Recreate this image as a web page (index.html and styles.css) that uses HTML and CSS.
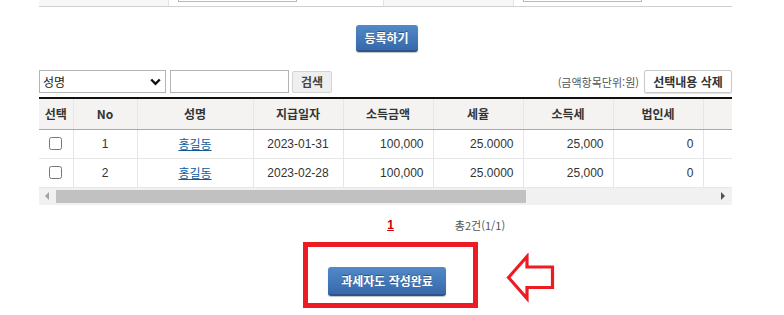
FILE: index.html
```html
<!DOCTYPE html>
<html lang="ko">
<head>
<meta charset="utf-8">
<link rel="stylesheet" href="styles.css">
</head>
<body>
<div class="page">
  <div class="top-form">
    <div class="tf-label"></div>
    <div class="tf-field"><input class="tf-input" type="text"></div>
    <div class="tf-label"></div>
    <div class="tf-field last"><input class="tf-input" type="text"></div>
  </div>

  <div class="center-row reg-row">
    <button class="btn-blue btn-reg" type="button">등록하기</button>
  </div>

  <div class="search-row">
    <div class="search-left">
      <div class="select-wrap">
        <select class="sel"><option>성명</option></select>
        <svg class="chev" width="11" height="8" viewBox="0 0 11 8"><path d="M1.2 1.5 L5.5 5.8 L9.8 1.5" fill="none" stroke="#111" stroke-width="2.4"/></svg>
      </div>
      <input class="search-input" type="text">
      <button class="btn-gray" type="button">검색</button>
    </div>
    <div class="search-right">
      <span class="unit">(금액항목단위:원)</span>
      <button class="btn-white" type="button">선택내용 삭제</button>
    </div>
  </div>

  <div class="grid-wrap">
    <table class="grid">
      <colgroup>
        <col class="c-sel"><col class="c-no"><col class="c-name">
        <col class="c-w"><col class="c-w"><col class="c-w"><col class="c-w"><col class="c-w"><col class="c-w">
      </colgroup>
      <thead>
        <tr><th>선택</th><th>No</th><th>성명</th><th>지급일자</th><th>소득금액</th><th>세율</th><th>소득세</th><th>법인세</th><th>지방세</th></tr>
      </thead>
      <tbody>
        <tr>
          <td class="ct"><input class="chk" type="checkbox"></td><td class="ct">1</td><td class="ct"><a class="name" href="#">홍길동</a></td>
          <td class="ct">2023-01-31</td><td class="rt">100,000</td><td class="rt">25.0000</td><td class="rt">25,000</td><td class="rt">0</td><td class="rt"></td>
        </tr>
        <tr>
          <td class="ct"><input class="chk" type="checkbox"></td><td class="ct">2</td><td class="ct"><a class="name" href="#">홍길동</a></td>
          <td class="ct">2023-02-28</td><td class="rt">100,000</td><td class="rt">25.0000</td><td class="rt">25,000</td><td class="rt">0</td><td class="rt"></td>
        </tr>
      </tbody>
    </table>
  </div>
  <div class="hscroll">
    <div class="sb-btn"><svg width="5" height="8" viewBox="0 0 5 8"><path d="M4 0 L0 4 L4 8 Z" fill="#a3a3a3"/></svg></div>
    <div class="sb-track"><div class="sb-thumb"></div></div>
    <div class="sb-btn"><svg width="5" height="8" viewBox="0 0 5 8"><path d="M0 0 L4 4 L0 8 Z" fill="#505050"/></svg></div>
  </div>

  <div class="paging">
    <div></div>
    <a class="page-cur" href="#">1</a>
    <span class="total">총2건(1/1)</span>
  </div>

  <div class="finish-row">
    <div class="red-box">
      <button class="btn-blue btn-finish" type="button">과세자도 작성완료</button>
    </div>
    <svg class="red-arrow" width="51" height="50" viewBox="0 0 51 50">
      <path d="M3.5 24.5 L22 3.5 L22 14 L47.5 14 L47.5 34.5 L22 34.5 L22 45.5 Z" fill="none" stroke="#ed1c24" stroke-width="3.2" stroke-linejoin="miter"/>
    </svg>
  </div>
</div>
</body>
</html>
```

FILE: styles.css
```css
* { box-sizing: border-box; }
html, body { margin: 0; padding: 0; background: #fff; }
body {
  font-family: "Liberation Sans", "Noto Sans CJK KR", sans-serif;
  font-size: 12px;
  color: #333;
  overflow: hidden;
}
.page {
  width: 693px;
  margin-left: 39px;
}

/* top form remnant */
.top-form {
  display: grid;
  grid-template-columns: 130px 215px 130px 218px;
  height: 31px;
  margin-top: -24px;
  border-bottom: 1px solid #cfcfcf;
}
.tf-label {
  background: #f7f7f7;
  border-right: 1px solid #e3e3e3;
}
.tf-field {
  display: flex;
  align-items: center;
  padding-left: 9px;
  border-right: 1px solid #e3e3e3;
}
.tf-field.last { border-right: 0; }
.tf-input {
  width: 119px;
  height: 22px;
  border: 1px solid #b9b9b9;
  margin: 0;
}

/* register button */
.center-row {
  display: flex;
  justify-content: center;
}
.reg-row { margin-top: 18px; padding-left: 2px; }
.btn-blue {
  font-family: "Noto Sans CJK KR", "Liberation Sans", sans-serif;
  font-weight: 700;
  color: #fff;
  background: linear-gradient(#5189c9, #3869aa);
  border: 0;
  border-bottom: 2px solid #2c5590;
  border-radius: 3px;
  box-shadow: 0 1px 1px rgba(0,0,0,0.25);
  text-shadow: 0 -1px 0 rgba(0,0,0,0.35);
  padding: 0;
  margin: 0;
}
.btn-reg {
  width: 62px;
  height: 27px;
  font-size: 12px;
}

/* search row */
.search-row {
  display: flex;
  justify-content: space-between;
  align-items: center;
  margin-top: 18px;
  height: 23px;
}
.search-left, .search-right {
  display: flex;
  align-items: center;
}
.select-wrap {
  position: relative;
  width: 127px;
  height: 23px;
}
.sel {
  appearance: none;
  -webkit-appearance: none;
  width: 127px;
  height: 23px;
  margin: 0;
  border: 1px solid #b4b4b4;
  border-radius: 0;
  background: #fff;
  padding: 0 0 0 3px;
  font-family: "Noto Sans CJK KR", sans-serif;
  font-size: 12px;
  color: #222;
}
.chev {
  position: absolute;
  right: 5px;
  top: 8px;
  pointer-events: none;
}
.search-input {
  width: 119px;
  height: 23px;
  margin: 0 0 0 4px;
  border: 1px solid #b4b4b4;
}
.btn-gray {
  margin-left: 3px;
  width: 40px;
  height: 22px;
  padding: 0;
  font-family: "Noto Sans CJK KR", sans-serif;
  font-size: 12px;
  font-weight: 700;
  color: #444;
  background: #efefef;
  border: 1px solid #d3d3d3;
  border-radius: 2px;
}
.unit {
  font-family: "Noto Sans CJK KR", sans-serif;
  font-size: 11px;
  color: #555;
  margin-right: 5px;
}
.btn-white {
  width: 88px;
  height: 23px;
  padding: 0;
  font-family: "Noto Sans CJK KR", sans-serif;
  font-size: 12px;
  font-weight: 700;
  color: #333;
  background: #fff;
  border: 1px solid #c8c8c8;
  border-radius: 2px;
  box-shadow: 0 1px 1px rgba(0,0,0,0.12);
}

/* grid */
.grid-wrap {
  margin-top: 4px;
  width: 693px;
  overflow: hidden;
  border-top: 2px solid #111;
}
.grid {
  border-collapse: collapse;
  table-layout: fixed;
  width: 754px;
}
.c-sel { width: 34px; }
.c-no { width: 64px; }
.c-name { width: 116px; }
.c-w { width: 90px; }
.grid th {
  height: 30px;
  background: #f4f3f1;
  border-bottom: 1px solid #a8a8a8;
  border-right: 1px solid #e6e6e6;
  font-family: "Noto Sans CJK KR", "Liberation Sans", sans-serif;
  font-size: 12px;
  font-weight: 700;
  color: #333;
  padding: 0;
  white-space: nowrap;
  overflow: hidden;
}
.grid td {
  height: 29px;
  border-bottom: 1px solid #e6e6e6;
  border-right: 1px solid #e6e6e6;
  padding: 0 9px 0 0;
  font-size: 12px;
  color: #333;
  white-space: nowrap;
}
.grid td.ct { text-align: center; padding: 0; }
.grid td.rt { text-align: right; }
.chk {
  margin: 3px 0 0 0;
  width: 13px;
  height: 13px;
}
.name {
  font-family: "Noto Sans CJK KR", sans-serif;
  color: #0b5c9e;
  text-decoration: underline;
}

/* fake horizontal scrollbar */
.hscroll {
  display: flex;
  height: 17px;
  background: #f1f1f1;
}
.sb-btn {
  width: 17px;
  height: 17px;
  display: flex;
  align-items: center;
  justify-content: center;
}
.sb-track {
  flex: 1;
  padding: 2px 0;
}
.sb-thumb {
  width: 470px;
  height: 13px;
  background: #c1c1c1;
}

/* paging */
.paging {
  display: grid;
  grid-template-columns: 1fr auto 1fr;
  align-items: center;
  margin-top: 12px;
  height: 16px;
}
.page-cur {
  color: #c00;
  font-weight: 700;
  text-decoration: underline;
  padding-left: 10px;
}
.total {
  font-family: "Noto Sans CJK KR", "Liberation Sans", sans-serif;
  font-size: 11px;
  color: #555;
  padding-left: 61px;
}

/* finish row */
.finish-row {
  display: flex;
  align-items: flex-start;
  margin-top: 9px;
  padding-left: 264px;
}
.red-box {
  border: 5px solid #ed1c24;
  width: 175px;
  height: 66px;
  padding: 20px 0 0 20px;
}
.btn-finish {
  width: 118px;
  height: 29px;
  font-size: 12px;
}
.red-arrow {
  margin-left: 27px;
  margin-top: 11px;
}
```
